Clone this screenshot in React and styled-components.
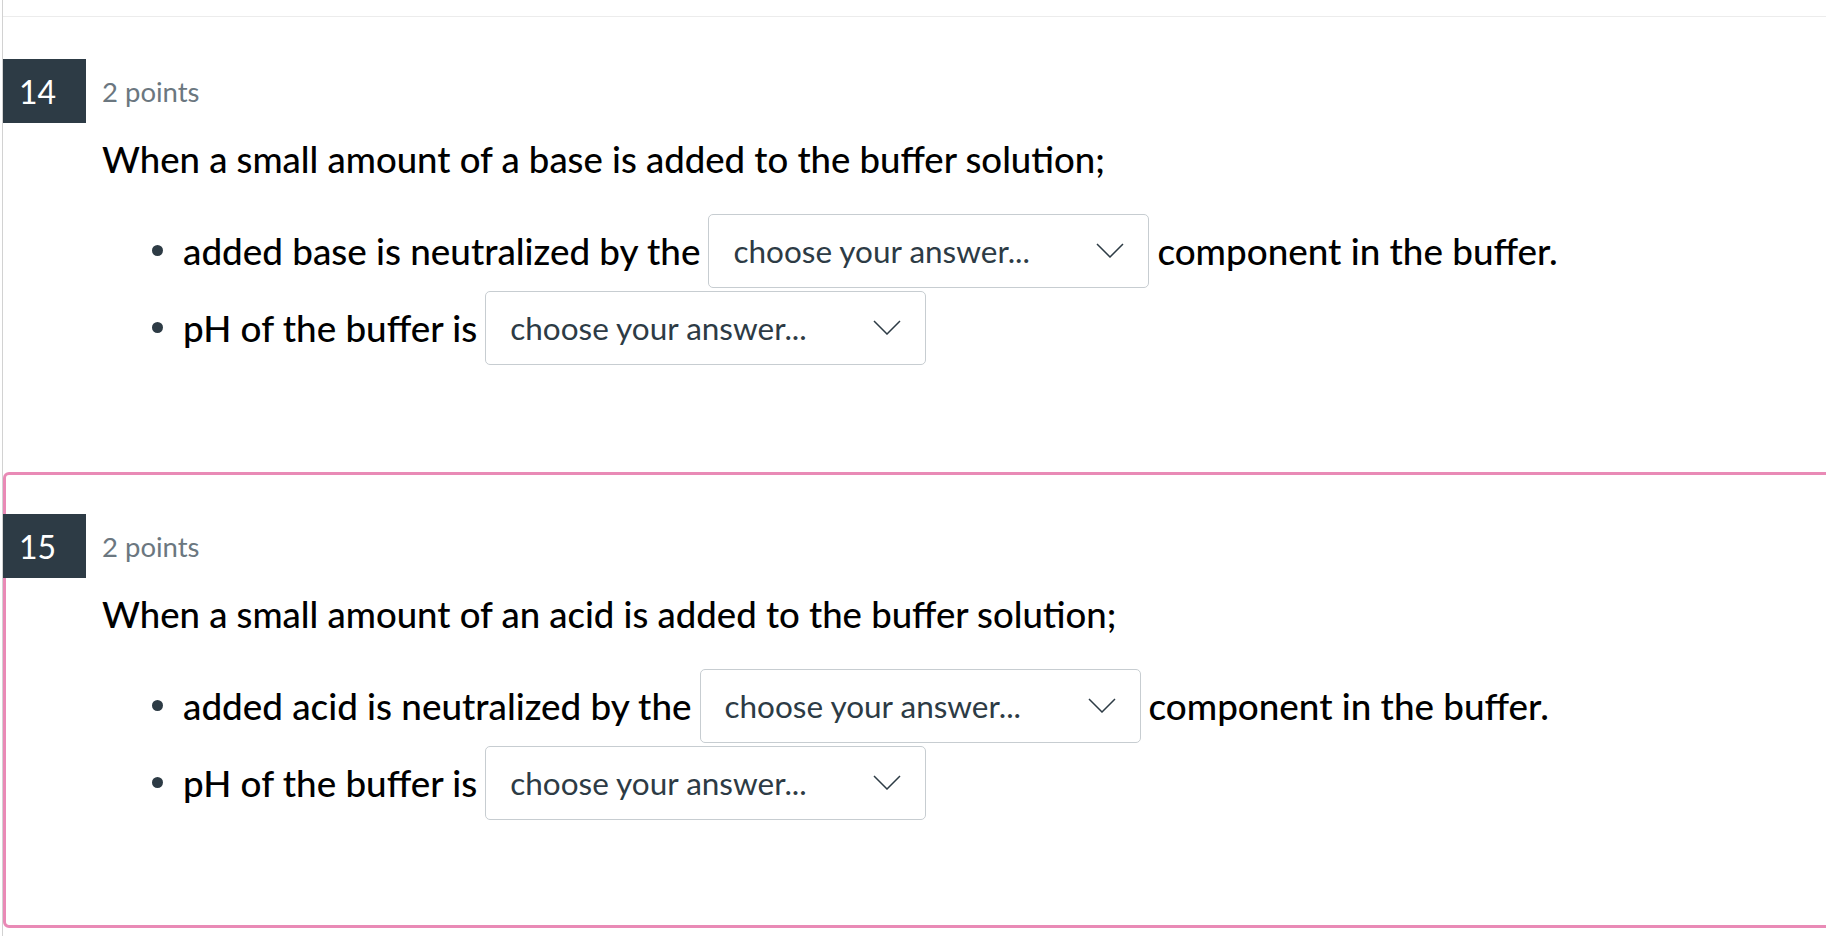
import styled, { createGlobalStyle } from "styled-components";

const GlobalStyle = createGlobalStyle`
  html, body {
    margin: 0;
    padding: 0;
    background: #fff;
  }
  body {
    font-family: Lato, "Open Sans", "Liberation Sans", sans-serif;
    color: #000;
  }
`

const questions = [
    {
        number: 14,
        points: "2 points",
        text: "When a small amount of a base is added to the buffer solution;",
        first: "added base is neutralized by the",
        selected: false,
    },
    {
        number: 15,
        points: "2 points",
        text: "When a small amount of an acid is added to the buffer solution;",
        first: "added acid is neutralized by the",
        selected: true,
    },
]

const App = () => {
    return (
        <>
            <GlobalStyle/>
            <Page>
                <TopGap/>
                {questions.map(q => <Question key={q.number} {...q}/>)}
            </Page>
        </>
    )
}

const Question = (props) => (
    <Card selected={props.selected}>
        <Header selected={props.selected}>
            <NumberBox>{props.number}</NumberBox>
            <Points>{props.points}</Points>
        </Header>
        <Body selected={props.selected}>
            <QuestionText>{props.text}</QuestionText>
            <BulletList>
                <Bullet>
                    <span>{props.first}</span>
                    <Dropdown/>
                    <span>component in the buffer.</span>
                </Bullet>
                <Bullet>
                    <span>pH of the buffer is</span>
                    <Dropdown/>
                </Bullet>
            </BulletList>
        </Body>
    </Card>
)

const Dropdown = () => (
    <Select>
        <span>choose your answer...</span>
        <Chevron viewBox="0 0 28 15">
            <path d="M1 1 L14 14 L27 1" fill="none" stroke="#2d3b45" strokeWidth="1.5"/>
        </Chevron>
    </Select>
)

const Page = styled.div`
  margin-left: 2px;
  border-left: 1px solid #d2d2d2;
  min-height: 936px;
  overflow: hidden;
  box-sizing: border-box;
`

const TopGap = styled.div`
  height: 16px;
`

const Card = styled.div`
  position: relative;
  margin-right: -30px;
  box-sizing: border-box;
  height: 456px;
  border-top: 1px solid #ececec;
  ${props => props.selected && `
    border: 3px solid #e98ab6;
    border-radius: 6px;
  `}
`

const Header = styled.div`
  display: flex;
  align-items: center;
  margin-top: ${props => props.selected ? 39 : 42}px;
  margin-left: ${props => props.selected ? -6 : -3}px;
`

const NumberBox = styled.div`
  width: 86px;
  height: 64px;
  box-sizing: border-box;
  padding-left: 19px;
  display: flex;
  align-items: center;
  background: #2d3b45;
  color: #fff;
  font-size: 32px;
`

const Points = styled.div`
  margin-left: 16px;
  font-size: 27.5px;
  color: #6b7780;
`

const Body = styled.div`
  padding-left: ${props => props.selected ? 96 : 99}px;
`

const QuestionText = styled.div`
  margin-top: 15px;
  font-size: 36.5px;
  font-weight: 500;
  line-height: 1.2;
`

const BulletList = styled.ul`
  list-style: none;
  margin: 32px 0 0 0;
  padding: 0 0 0 50px;
  display: flex;
  flex-direction: column;
  gap: 3px;
`

const Bullet = styled.li`
  display: flex;
  align-items: center;
  gap: 8px;
  font-size: 36.8px;
  font-weight: 500;
  white-space: nowrap;

  &::before {
    content: "";
    width: 11px;
    height: 11px;
    border-radius: 50%;
    background: #2d3b45;
    margin-right: 12px;
  }
`

const Select = styled.div`
  width: 441px;
  height: 74px;
  box-sizing: border-box;
  border: 1px solid #c7cdd1;
  border-radius: 5px;
  padding: 0 24px 0 24px;
  display: flex;
  align-items: center;
  justify-content: space-between;
  font-size: 31.5px;
  font-weight: 400;
  color: #2d3b45;
  background: #fff;
`

const Chevron = styled.svg`
  width: 28px;
  height: 15px;
`

export default App
